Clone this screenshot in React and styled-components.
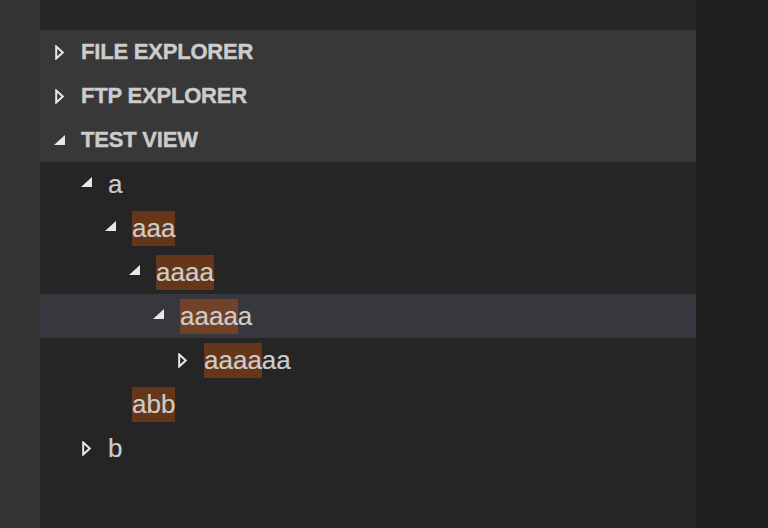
import React from "react";
import styled, { createGlobalStyle } from "styled-components";

const Global = createGlobalStyle`
  html, body { margin: 0; padding: 0; background: #252526; }
  body { font-family: "Liberation Sans", Arial, sans-serif; }
`;

const Shell = styled.div`
  display: flex;
  width: 768px;
  height: 528px;
  overflow: hidden;
`;

const ActivityBar = styled.div`
  width: 40px;
  flex: none;
  background: #333333;
`;

const Sidebar = styled.div`
  width: 656px;
  flex: none;
  display: flex;
  flex-direction: column;
  background: #252526;
`;

const Editor = styled.div`
  flex: 1;
  background: #1e1e1e;
`;

const TitleSpace = styled.div`
  height: 30px;
  flex: none;
`;

const Header = styled.div`
  height: 44px;
  display: flex;
  align-items: center;
  padding-left: 5px;
  background: #383838;
  color: #cccccc;
  font-weight: 700;
  font-size: 22px;
  letter-spacing: -0.2px;
  -webkit-text-stroke: 0.4px #cccccc;
  text-transform: uppercase;
`;

const Twistie = styled.span`
  width: 28px;
  height: 100%;
  flex: none;
  display: flex;
  align-items: center;
  justify-content: center;
  margin-right: 8px;
  margin-top: ${(p) => (p.$up ? "-4px" : "0")};
`;

const Tree = styled.div`
  display: flex;
  flex-direction: column;
`;

const Row = styled.div`
  height: 44px;
  display: flex;
  align-items: center;
  padding-left: ${(p) => 32 + 24 * (p.$depth - 1)}px;
  background: ${(p) => (p.$selected ? "#37373d" : "transparent")};
  color: #cccccc;
  font-size: 26px;
  line-height: 44px;
  -webkit-text-stroke: 0.2px #cccccc;
`;

const Label = styled.span`
  white-space: pre;
`;

const Match = styled.span`
  background: rgba(234, 92, 0, 0.33);
  padding: 2px 0 3px;
`;

const Expanded = () => (
  <svg width="11" height="10" viewBox="0 0 11 10">
    <polygon points="11,0 11,10 0,10" fill="#e8e8e8" />
  </svg>
);

const Collapsed = () => (
  <svg width="9" height="15" viewBox="0 0 9 15">
    <polygon points="1.2,1.5 7.8,7.5 1.2,13.5" fill="none" stroke="#e8e8e8" strokeWidth="2" strokeLinejoin="miter" />
  </svg>
);

const headers = [
  { name: "File Explorer", open: false },
  { name: "FTP Explorer", open: false },
  { name: "Test View", open: true },
];

const rows = [
  { depth: 1, twistie: "open", match: "", rest: "a" },
  { depth: 2, twistie: "open", match: "aaa", rest: "" },
  { depth: 3, twistie: "open", match: "aaaa", rest: "" },
  { depth: 4, twistie: "open", match: "aaaa", rest: "a", selected: true },
  { depth: 5, twistie: "closed", match: "aaaa", rest: "aa" },
  { depth: 2, twistie: "none", match: "abb", rest: "" },
  { depth: 1, twistie: "closed", match: "", rest: "b" },
];

export default function App() {
  return (
    <>
      <Global />
      <Shell>
        <ActivityBar />
        <Sidebar>
          <TitleSpace />
          {headers.map((h) => (
            <Header key={h.name}>
              <Twistie>{h.open ? <Expanded /> : <Collapsed />}</Twistie>
              {h.name}
            </Header>
          ))}
          <Tree>
            {rows.map((r, i) => (
              <Row key={i} $depth={r.depth} $selected={r.selected}>
                <Twistie $up={r.twistie === "open"}>
                  {r.twistie === "open" && <Expanded />}
                  {r.twistie === "closed" && <Collapsed />}
                </Twistie>
                <Label>
                  {r.match && <Match>{r.match}</Match>}
                  {r.rest}
                </Label>
              </Row>
            ))}
          </Tree>
        </Sidebar>
        <Editor />
      </Shell>
    </>
  );
}
